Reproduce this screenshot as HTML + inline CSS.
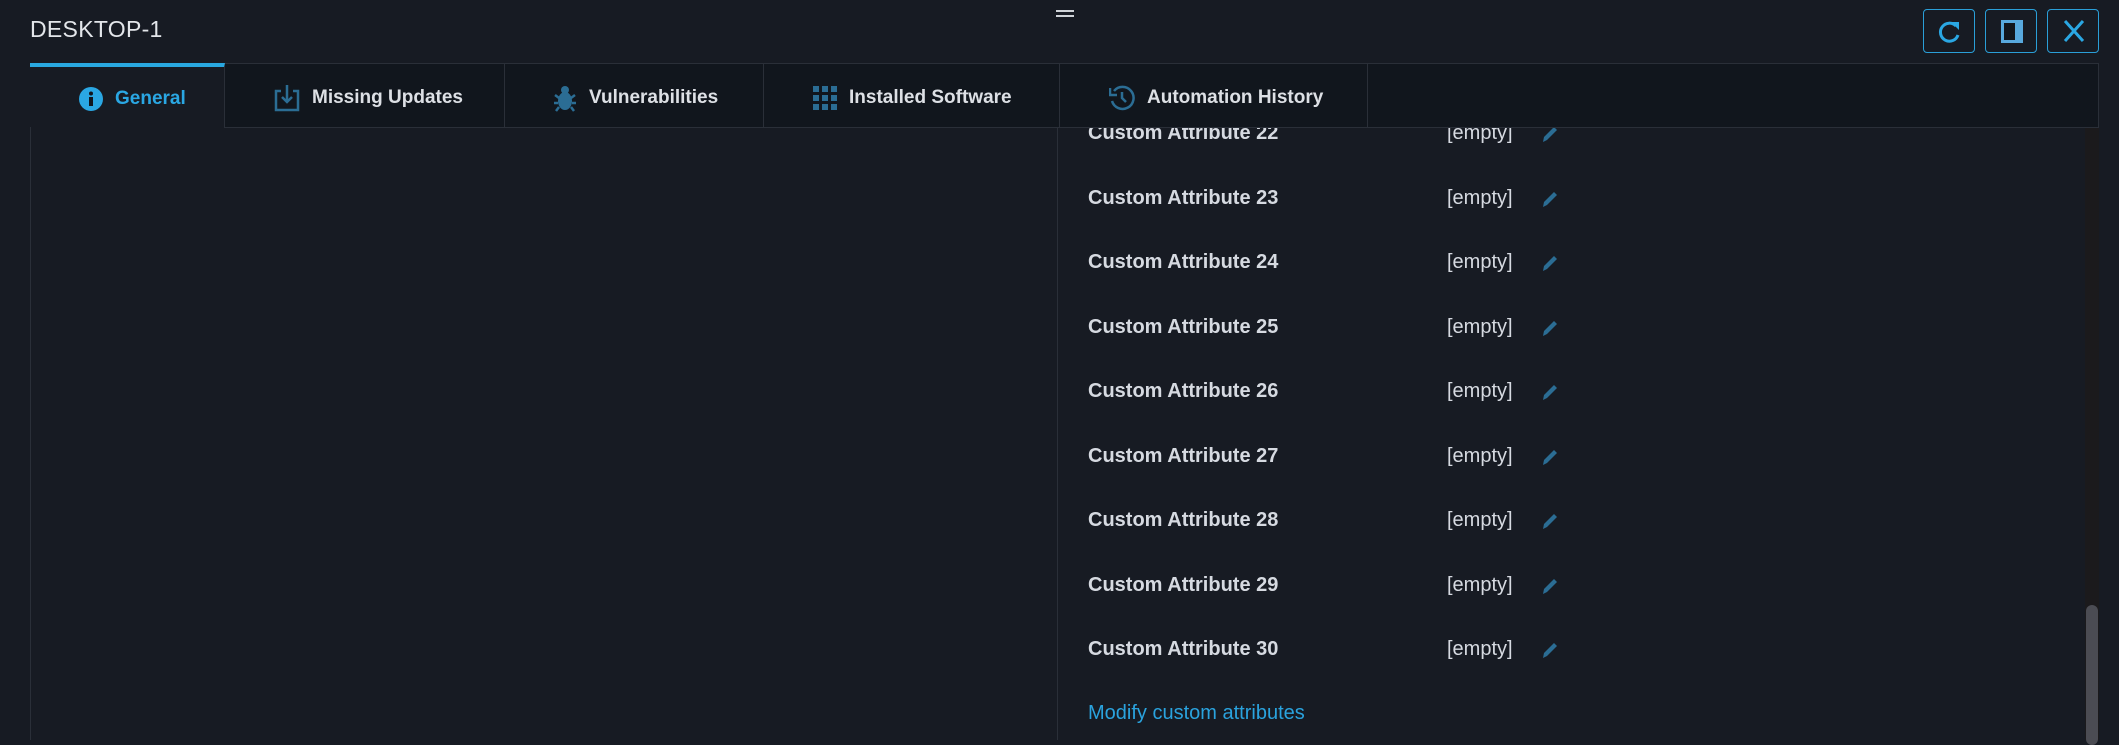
<!DOCTYPE html>
<html><head><meta charset="utf-8"><style>
*{margin:0;padding:0;box-sizing:border-box}
body{width:2119px;height:740px;background:#171b23;font-family:"Liberation Sans",sans-serif;position:relative;overflow:hidden;color:#d6dae1}
.abs{position:absolute}
.title{left:30px;top:16px;font-size:23px;color:#e3e6ea;letter-spacing:0.3px}
.handle{left:1056px;top:10px;width:18px;height:7px;border-top:2px solid #cfd3d8;border-bottom:2px solid #cfd3d8}
.btn{top:9px;width:52px;height:44px;border:1.5px solid #2a9fd8;border-radius:4px}
.bar{left:30px;top:63px;width:2069px;height:65px;background:#11161d;border:1px solid #2a2f38}
.tab{position:absolute;top:0;height:63px;padding-top:5px;display:flex;align-items:center;font-weight:bold;font-size:19px;color:#dde0e5;border-right:1px solid #2a2f38}
.tab svg{margin-right:12px}
.active{background:#171b23;color:#2aa7e3;border-top:4px solid #29a8e0;height:65px;top:-1px;left:-1px;padding-top:2px}
.lside{left:30px;top:127px;width:1px;height:613px;background:#2a2f38}
.div{left:1057px;top:127px;width:1px;height:613px;background:#2a2f38}
.lbl{left:1088px;font-weight:bold;font-size:20px;color:#d6dae1}
.val{left:1447px;font-size:20px;color:#d6dae1}
.link{left:1088px;top:702px;font-size:20px;color:#2aa3de}
.track{left:2085px;top:128px;width:14px;height:612px;background:#1b1a1c}
.thumb{left:2086px;top:605px;width:12px;height:140px;background:#4b4c53;border-radius:6px}
</style></head><body>
<div class="abs title">DESKTOP-1</div>
<div class="abs handle"></div>
<div class="abs btn" style="left:1923px"><svg width="52" height="44" viewBox="0 0 52 44"><path d="M32 16 A9 9 0 1 0 34 25" fill="none" stroke="#2aa7e3" stroke-width="3"/><path d="M27 12 L35 12 L35 20 Z" fill="#2aa7e3"/></svg></div>
<div class="abs btn" style="left:1985px"><svg width="52" height="44" viewBox="0 0 52 44"><rect x="15" y="10" width="22" height="23" fill="#58a9de"/><rect x="18" y="13" width="11" height="17" fill="#11161d"/></svg></div>
<div class="abs btn" style="left:2047px"><svg width="52" height="44" viewBox="0 0 52 44"><path d="M17 11 L35 31 M35 11 L17 31" stroke="#2aa7e3" stroke-width="3"/></svg></div>
<div class="abs bar">
<div class="tab active" style="width:195px;padding-left:49px"><svg width="24" height="24"><circle cx="12" cy="12" r="12" fill="#2aa7e3"/><rect x="10" y="10" width="4" height="9" fill="#11161d"/><circle cx="12" cy="6.5" r="2" fill="#11161d"/></svg>General</div>
<div class="tab" style="left:194px;width:280px;padding-left:49px"><svg width="26" height="28"><path d="M7 7 H2 V26 H24 V7 H19" fill="none" stroke="#2b6d94" stroke-width="2.5"/><path d="M13 1 V18 M8 13 L13 18 L18 13" fill="none" stroke="#2b6d94" stroke-width="2.5"/></svg>Missing Updates</div>
<div class="tab" style="left:474px;width:259px;padding-left:48px"><svg width="24" height="28"><ellipse cx="12" cy="17" rx="7" ry="9" fill="#2b6d94"/><circle cx="12" cy="6" r="4" fill="#2b6d94"/><path d="M2 11 L6 14 M22 11 L18 14 M1 19 H5 M23 19 H19 M3 27 L6 23 M21 27 L18 23" stroke="#2b6d94" stroke-width="2.5"/></svg>Vulnerabilities</div>
<div class="tab" style="left:733px;width:296px;padding-left:49px"><svg width="24" height="24"><g fill="#2b6d94"><rect x="0" y="0" width="6" height="6"/><rect x="9" y="0" width="6" height="6"/><rect x="18" y="0" width="6" height="6"/><rect x="0" y="9" width="6" height="6"/><rect x="9" y="9" width="6" height="6"/><rect x="18" y="9" width="6" height="6"/><rect x="0" y="18" width="6" height="6"/><rect x="9" y="18" width="6" height="6"/><rect x="18" y="18" width="6" height="6"/></g></svg>Installed Software</div>
<div class="tab" style="left:1029px;width:308px;padding-left:49px"><svg width="26" height="26"><path d="M5 6 A11 11 0 1 1 3 16" fill="none" stroke="#2b6d94" stroke-width="2.5"/><path d="M1 3 V10 H8" fill="none" stroke="#2b6d94" stroke-width="2.5"/><path d="M13 7 V13 L17 17" fill="none" stroke="#2b6d94" stroke-width="2.5"/></svg>Automation History</div>
</div>
<div class="abs lside"></div>
<div class="abs div"></div>
<div class="abs track"></div>
<div class="abs thumb"></div>
<div style="position:absolute;left:0;top:128px;width:2085px;height:612px;overflow:hidden">
<div style="position:relative;top:-128px">
<div class="abs lbl" style="top:122px">Custom Attribute 22</div><div class="abs val" style="top:122px">[empty]</div>
<div class="abs lbl" style="top:187px">Custom Attribute 23</div><div class="abs val" style="top:187px">[empty]</div>
<div class="abs lbl" style="top:251px">Custom Attribute 24</div><div class="abs val" style="top:251px">[empty]</div>
<div class="abs lbl" style="top:316px">Custom Attribute 25</div><div class="abs val" style="top:316px">[empty]</div>
<div class="abs lbl" style="top:380px">Custom Attribute 26</div><div class="abs val" style="top:380px">[empty]</div>
<div class="abs lbl" style="top:445px">Custom Attribute 27</div><div class="abs val" style="top:445px">[empty]</div>
<div class="abs lbl" style="top:509px">Custom Attribute 28</div><div class="abs val" style="top:509px">[empty]</div>
<div class="abs lbl" style="top:574px">Custom Attribute 29</div><div class="abs val" style="top:574px">[empty]</div>
<div class="abs lbl" style="top:638px">Custom Attribute 30</div><div class="abs val" style="top:638px">[empty]</div>
<svg class="abs" style="left:1540px;top:124px" width="20" height="20"><path d="M3 18 L4 13 L14 3 L17 6 L7 16 Z" fill="#2b6d94"/></svg>
<svg class="abs" style="left:1540px;top:189px" width="20" height="20"><path d="M3 18 L4 13 L14 3 L17 6 L7 16 Z" fill="#2b6d94"/></svg>
<svg class="abs" style="left:1540px;top:253px" width="20" height="20"><path d="M3 18 L4 13 L14 3 L17 6 L7 16 Z" fill="#2b6d94"/></svg>
<svg class="abs" style="left:1540px;top:318px" width="20" height="20"><path d="M3 18 L4 13 L14 3 L17 6 L7 16 Z" fill="#2b6d94"/></svg>
<svg class="abs" style="left:1540px;top:382px" width="20" height="20"><path d="M3 18 L4 13 L14 3 L17 6 L7 16 Z" fill="#2b6d94"/></svg>
<svg class="abs" style="left:1540px;top:447px" width="20" height="20"><path d="M3 18 L4 13 L14 3 L17 6 L7 16 Z" fill="#2b6d94"/></svg>
<svg class="abs" style="left:1540px;top:511px" width="20" height="20"><path d="M3 18 L4 13 L14 3 L17 6 L7 16 Z" fill="#2b6d94"/></svg>
<svg class="abs" style="left:1540px;top:576px" width="20" height="20"><path d="M3 18 L4 13 L14 3 L17 6 L7 16 Z" fill="#2b6d94"/></svg>
<svg class="abs" style="left:1540px;top:640px" width="20" height="20"><path d="M3 18 L4 13 L14 3 L17 6 L7 16 Z" fill="#2b6d94"/></svg>
<div class="abs link">Modify custom attributes</div>
</div></div>
</body></html>
